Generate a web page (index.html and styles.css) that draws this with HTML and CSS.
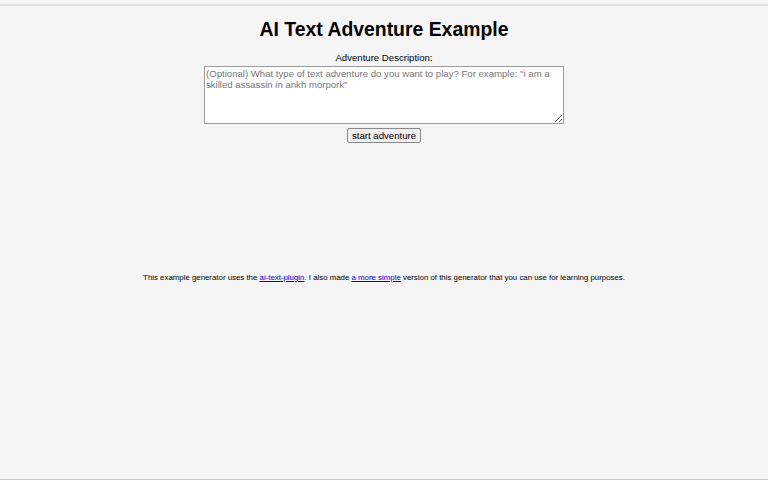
FILE: index.html
```html
<!DOCTYPE html>
<html lang="en">
<head>
<meta charset="utf-8">
<title>AI Text Adventure Example</title>
<link rel="stylesheet" href="styles.css">
</head>
<body>
<div class="frame">
  <main class="page">
    <h1 class="title">AI Text Adventure Example</h1>
    <div class="form">
      <label class="label" for="desc">Adventure Description:</label>
      <textarea id="desc" class="desc" placeholder="(Optional) What type of text adventure do you want to play? For example: &quot;i am a skilled assassin in ankh morpork&quot;"></textarea>
      <button class="start" type="button">start adventure</button>
    </div>
    <p class="note">This example generator uses the <a href="#">ai-text-plugin</a>. I also made <a href="#">a more simple</a> version of this generator that you can use for learning purposes.</p>
  </main>
</div>
</body>
</html>
```
FILE: styles.css
```css
html, body {
  margin: 0;
  height: 100%;
}

body {
  background: #f5f5f5;
  font-family: "Liberation Sans", Arial, sans-serif;
  color: #000;
}

.frame {
  box-sizing: border-box;
  height: 480px;
  padding-top: 4px;
  border-bottom: 1px solid #c8c8c8;
  overflow: hidden;
}

.page {
  border-top: 2px solid #e2e2e2;
  display: flex;
  flex-direction: column;
  align-items: center;
}

.title {
  margin: 12px 0 0;
  font-size: 19.4px;
  line-height: 23px;
  font-weight: bold;
}

.form {
  margin-top: 11px;
  display: flex;
  flex-direction: column;
  align-items: center;
}

.label {
  font-size: 9.6px;
  line-height: 12px;
}

.desc {
  box-sizing: border-box;
  width: 360px;
  height: 58px;
  margin-top: 2px;
  padding: 1px 1px;
  font-family: "Liberation Sans", Arial, sans-serif;
  font-size: 9.6px;
  line-height: 11px;
  border: 1px solid #9a9a9a;
  background: #fff;
}

.desc::placeholder {
  color: #777;
}

.start {
  box-sizing: border-box;
  margin-top: 4px;
  height: 15px;
  padding: 0 4px;
  font-family: "Liberation Sans", Arial, sans-serif;
  font-size: 9.6px;
  line-height: 12px;
  color: #000;
  background: #efefef;
  border: 1px solid #8a8a8a;
  border-radius: 2px;
}

.note {
  margin: 130px 0 0;
  font-size: 7.85px;
  line-height: 10px;
}

.note a {
  color: #0000ee;
}
```
